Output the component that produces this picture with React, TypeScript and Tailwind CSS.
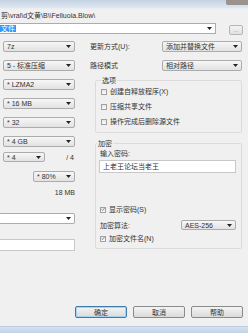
import React from "react";

function Arrow() {
  return (
    <svg width="5" height="3" viewBox="0 0 5 3" className="shrink-0">
      <path d="M0 0h5L2.5 3z" fill="#222" />
    </svg>
  );
}

function Combo({
  text,
  className = "",
  white = false,
}: {
  text: string;
  className?: string;
  white?: boolean;
}) {
  return (
    <div
      className={`flex items-center justify-between border border-[#acacac] rounded-[2px] pl-[3px] pr-[3px] ${
        white ? "bg-white" : "bg-linear-to-b from-[#f7f7f7] to-[#e2e2e2]"
      } ${className}`}
    >
      <span className="text-[7px] leading-none text-[#333] whitespace-nowrap">{text}</span>
      <Arrow />
    </div>
  );
}

function Check({ label, checked = false }: { label: string; checked?: boolean }) {
  return (
    <div className="flex items-center h-[7px] gap-[3px]">
      <div className="w-[6px] h-[6px] border border-[#a0a0a0] bg-linear-to-b from-[#e6e6e6] to-[#fbfbfb] flex items-center justify-center">
        {checked && (
          <svg width="5" height="5" viewBox="0 0 5 5">
            <path d="M0.6 2.6L1.9 3.9L4.4 0.8" stroke="#6a6a6a" strokeWidth="0.9" fill="none" />
          </svg>
        )}
      </div>
      <span className="text-[7px] leading-none text-[#333] whitespace-nowrap">{label}</span>
    </div>
  );
}

function Btn({ label, primary = false }: { label: string; primary?: boolean }) {
  return (
    <div
      className={`w-[52px] h-[12px] flex items-center justify-center rounded-[2px] border ${
        primary ? "border-[#3d7bad] shadow-[inset_0_0_0_1px_#a6d3f2]" : "border-[#8a8a8a]"
      } bg-linear-to-b from-[#f4f4f4] to-[#dadada]`}
    >
      <span className="text-[7px] leading-none text-[#333]">{label}</span>
    </div>
  );
}

export default function App() {
  return (
    <div className="w-[248px] h-[333px] overflow-hidden bg-[#f0f0f0] flex flex-col font-['Liberation_Sans','Noto_Sans_CJK_SC',sans-serif] text-[#333]">
      {/* top frame */}
      <div className="h-[9px] flex bg-linear-to-b from-[#c4d2e1] to-[#dfe8f1] border-b border-[#e9eef4]">
        <div className="flex-1" />
        <div className="w-[22px] h-[5px] bg-[#9b918d] rounded-bl-[2px]" />
      </div>

      {/* path */}
      <div className="h-[13px] flex items-center pl-[1px]">
        <span className="text-[7px] leading-none whitespace-nowrap">{"剪\\vral\\d文黄\\B\\\\Felluoia.Blow\\"}</span>
      </div>

      {/* archive path combo */}
      <div className="flex items-center h-[13px]">
        <div className="w-[216px] h-[11px] bg-white border border-l-0 border-[#acacac] flex items-center justify-between pr-[3px] overflow-hidden">
          <span className="text-[7px] leading-none bg-[#3399ff] text-white pl-[1px] pr-[1px]">文件</span>
          <Arrow />
        </div>
        <div className="ml-[13px] w-[14px] h-[10px] mt-[3px] border border-[#b5b5b5] rounded-[2px] bg-linear-to-b from-[#f4f4f4] to-[#e0e0e0] flex items-center justify-center">
          <span className="text-[6px] leading-none text-[#888]">...</span>
        </div>
      </div>

      {/* main */}
      <div className="flex h-[271px]">
        {/* left column */}
        <div className="w-[75px] flex flex-col pt-[6px] pl-[3px]">
          <Combo text="7z" className="h-[11px]" />
          <Combo text="5 - 标准压缩" className="h-[11px] mt-[8px]" />
          <Combo text="* LZMA2" className="h-[11px] mt-[8px]" />
          <Combo text="* 16 MB" className="h-[11px] mt-[8px]" />
          <Combo text="* 32" className="h-[11px] mt-[8px]" />
          <Combo text="* 4 GB" className="h-[11px] mt-[8px]" />
          <div className="flex items-center justify-between mt-[5px] h-[10px]">
            <Combo text="* 4" className="h-[10px] w-[42px]" />
            <span className="text-[7px] leading-none pr-[1px]">/ 4</span>
          </div>
          <div className="flex justify-end mt-[9px]">
            <Combo text="* 80%" className="h-[11px] w-[42px]" />
          </div>
          <div className="flex justify-end mt-[6px] h-[8px] items-center">
            <span className="text-[7px] leading-none">18 MB</span>
          </div>
          <Combo white text="" className="h-[11px] mt-[17px] -ml-[4px] border-l-0" />
          <div className="h-[12px] mt-[15px] -ml-[4px] bg-white border border-l-0 border-[#c8c8c8]" />
        </div>

        {/* right column */}
        <div className="ml-[15px] w-[152px] flex flex-col pt-[6px]">
          <div className="flex items-center justify-between h-[11px]">
            <span className="text-[7px] leading-none">更新方式(U):</span>
            <Combo text="添加并替换文件" className="h-[11px] w-[80px]" />
          </div>
          <div className="flex items-center justify-between h-[11px] mt-[8px]">
            <span className="text-[7px] leading-none">路径模式</span>
            <Combo text="相对路径" className="h-[11px] w-[80px]" />
          </div>

          <fieldset className="ml-[5px] w-[147px] mt-[6px] border border-[#dcdcdc] rounded-[2px] pb-[7px]">
            <legend className="ml-[5px] px-[1px] text-[7px] leading-[7px]">选项</legend>
            <div className="flex flex-col gap-[8px] pl-[5px] pt-[4px]">
              <Check label="创建自释放程序(X)" />
              <Check label="压缩共享文件" />
              <Check label="操作完成后删除源文件" />
            </div>
          </fieldset>

          <fieldset className="ml-[5px] w-[147px] mt-[7px] border border-[#dcdcdc] rounded-[2px] pb-[6px]">
            <legend className="ml-[1px] px-[1px] text-[7px] leading-[7px]">加密</legend>
            <div className="flex flex-col pl-[4px] pt-[3px]">
              <span className="text-[7px] leading-[7px]">输入密码:</span>
              <div className="mt-[3px] -ml-[1px] w-[137px] h-[13px] bg-white border border-[#c8c8c8] flex items-center pl-[3px]">
                <span className="text-[7px] leading-none">上老王论坛当老王</span>
              </div>
              <div className="mt-[33px]">
                <Check label="显示密码(S)" checked />
              </div>
              <div className="flex items-center justify-between h-[10px] mt-[7px] pr-[5px]">
                <span className="text-[7px] leading-none">加密算法:</span>
                <Combo text="AES-256" className="h-[10px] w-[55px]" />
              </div>
              <div className="mt-[5px]">
                <Check label="加密文件名(N)" checked />
              </div>
            </div>
          </fieldset>
        </div>
      </div>

      {/* buttons */}
      <div className="flex h-[12px] pl-[75px] gap-[6px]">
        <Btn label="确定" primary />
        <Btn label="取消" />
        <Btn label="帮助" />
      </div>
      <div className="flex-1" />
      <div className="h-[7px] bg-linear-to-b from-[#d5e2ef] to-[#c2d4e6] border-t border-[#b9cbe0]" />
    </div>
  );
}
